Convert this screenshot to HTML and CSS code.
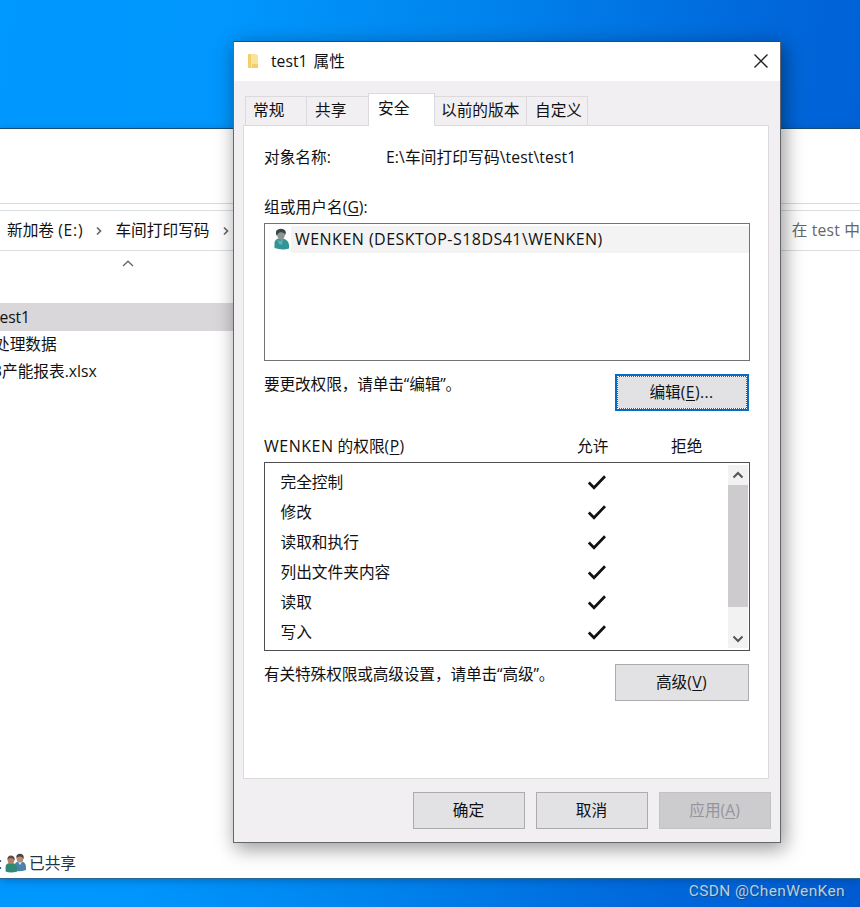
FILE: index.html
```html
<!DOCTYPE html>
<html lang="zh-CN">
<head>
<meta charset="utf-8">
<title>test1 属性</title>
<link rel="stylesheet" href="styles.css">
</head>
<body>
<svg width="0" height="0" class="defs">
  <symbol id="check" viewBox="0 0 20 18"><path d="M1.8 8.5 7 13.8 18 2.2" fill="none" stroke="#111" stroke-width="2.7"/></symbol>
  <symbol id="crumb" viewBox="0 0 6 10"><path d="M1 1.5 4.5 5 1 8.5" fill="none" stroke="#666" stroke-width="1.7"/></symbol>
</svg>
<main class="desktop">
  <section class="explorer">
    <div class="ribbon"></div>
    <div class="address">
      <div class="crumbs"><span>新加卷 <span class="drive">(E:)</span></span><svg class="crumb"><use href="#crumb"/></svg><span>车间打印写码</span><svg class="crumb"><use href="#crumb"/></svg></div>
      <div class="search">在 test 中</div>
    </div>
    <div class="columns"><svg width="12" height="7" viewBox="0 0 12 7"><path d="M1 6 6 1.2 11 6" fill="none" stroke="#666" stroke-width="1.3"/></svg></div>
    <div class="files">
      <div class="file selected">test1</div>
      <div class="file second">处理数据</div>
      <div class="file third">3产能报表<span class="ext">.xlsx</span></div>
    </div>
    <div class="status">
      <span class="colon">:</span>
      <svg width="22" height="20" viewBox="0 0 22 20">
        <path d="M9.5 18V13q0-4 4-4.500h3q4 .5 4.500 5v3.500q-5 2-11.500 1z" fill="#4b83ad"/>
        <path d="m13 9 2 3 2-3z" fill="#dcecf5"/>
        <ellipse cx="15" cy="5.500" rx="3.400" ry="4" fill="#b98d72"/>
        <path d="M11.300 5Q11 .8 15.200.8 19.500 1 18.600 6q-1-2.500-3.500-2.600T11.300 5z" fill="#4b4646"/>
        <path d="M.6 18.500V14q0-3.600 3.800-4h3q4 .5 4.600 4.500v4q-6 2-11.400 0z" fill="#2e8a73"/>
        <ellipse cx="6" cy="7.200" rx="3.300" ry="3.800" fill="#b48367"/>
        <path d="M2.400 7Q2 2.500 6.200 2.500 10.300 2.800 9.600 7.500 8.500 5.200 6 5.100T2.400 7z" fill="#5c4941"/>
      </svg>
      <span>已共享</span>
    </div>
  </section>
  <div class="watermark">CSDN @ChenWenKen</div>

  <section class="dialog">
    <header class="titlebar">
      <svg width="14" height="18" viewBox="0 0 14 18"><path d="M2 2h7l3 1v13H2z" fill="#fbe39a"/><path d="M2 2h3v14H2zM6 12h6v4H6z" fill="#f3ce6d"/></svg>
      <h1>test1 属性</h1>
      <svg width="16" height="16" viewBox="0 0 16 16"><path d="M1.500 1.500 14.500 14.500M14.500 1.500 1.500 14.500" stroke="#222" stroke-width="1.4"/></svg>
    </header>
    <nav class="tabs">
      <span class="tab general">常规</span><span class="tab share">共享</span><span class="tab active">安全</span><span class="tab previous">以前的版本</span><span class="tab custom">自定义</span>
    </nav>
    <div class="panel">
      <div class="object"><span class="object-label">对象名称:</span><span class="path">E:\车间打印写码\test\test1</span></div>
      <div class="group-label">组或用户名(<u>G</u>):</div>
      <div class="users">
        <svg width="18" height="22" viewBox="0 0 18 22">
          <path d="M1.500 20V15q0-3 3.500-4.500h4.500q6 1 6.500 6.500v3.500q-7 2-14.500-.5z" fill="#339593"/>
          <path d="M4 11q3 4 6 0l-1 6-3-1z" fill="#69aeb0"/>
          <path d="M4 5q0-3 4-3t4 4q0 5-4 6-4-1-4-7z" fill="#8c9494"/>
          <path d="M3 6Q2 1 8 .8q6 .4 4.600 6Q11 4 8 4.200 5 4 3.800 8z" fill="#38464a"/>
        </svg>
        <div class="user">WENKEN (DESKTOP-S18DS41\WENKEN)</div>
      </div>
      <div class="action edit"><span>要更改权限，请单击“编辑”。</span><button class="button focused"><span class="focus-ring">编辑<span class="key">(<u>E</u>)...</span></span></button></div>
      <div class="perm-head"><span class="perm-title"><span class="owner">WENKEN</span> 的权限<span class="key">(<u>P</u>)</span></span><span class="allow">允许</span><span>拒绝</span></div>
      <div class="perms">
        <div class="perm-list">
          <div class="perm"><span>完全控制</span><svg class="check"><use href="#check"/></svg></div>
          <div class="perm"><span>修改</span><svg class="check"><use href="#check"/></svg></div>
          <div class="perm"><span>读取和执行</span><svg class="check"><use href="#check"/></svg></div>
          <div class="perm"><span>列出文件夹内容</span><svg class="check"><use href="#check"/></svg></div>
          <div class="perm"><span>读取</span><svg class="check"><use href="#check"/></svg></div>
          <div class="perm"><span>写入</span><svg class="check"><use href="#check"/></svg></div>
        </div>
        <div class="scrollbar">
          <svg width="12" height="8" viewBox="0 0 12 8"><path d="M1.500 6.500 6 2l4.500 4.500" fill="none" stroke="#555" stroke-width="2"/></svg>
          <div class="thumb"></div>
          <svg width="12" height="8" viewBox="0 0 12 8"><path d="M1.500 1.500 6 6l4.500-4.500" fill="none" stroke="#555" stroke-width="2"/></svg>
        </div>
      </div>
      <div class="action advanced"><span>有关特殊权限或高级设置，请单击“高级”。</span><button class="button">高级<span class="key">(<u>V</u>)</span></button></div>
    </div>
    <footer class="footer">
      <button class="button">确定</button><button class="button">取消</button><button class="button disabled">应用(<u>A</u>)</button>
    </footer>
  </section>
</main>
</body>
</html>
```
FILE: styles.css
```css
* { box-sizing: border-box; }
body {
  margin: 0;
  font: 15.7px/22px "Open Sans", "Noto Sans CJK SC", sans-serif;
  color: #111;
}
svg { display: block; flex: none; }
.defs { position: absolute; }
u { text-decoration-thickness: 1px; text-underline-offset: 2px; }
.desktop {
  position: relative;
  width: 860px;
  height: 907px;
  overflow: hidden;
  padding-top: 128px;
  white-space: nowrap;
  background: linear-gradient(97deg, #0099ff 0%, #0096fd 25%, #0085ee 48%, #006bdd 75%, #005bd2 100%);
}
.explorer {
  height: 751px;
  display: flex;
  flex-direction: column;
  background: #fff;
  border-top: 1px solid #174d78;
  border-bottom: 1px solid #286796;
  box-shadow: 0 2px 8px #00306055;
}
.ribbon { height: 75px; border-bottom: 1px solid #d9d9d9; }
.address {
  height: 41px;
  margin-top: 6px;
  padding-bottom: 2px;
  display: flex;
  align-items: center;
  border-top: 1px solid #d9dede;
  border-bottom: 1px solid #d9dede;
}
.crumbs { display: flex; align-items: center; width: 792px; padding-left: 7px; }
.crumb { width: 6px; height: 10px; margin: 2px 13px 0 13px; }
.drive { letter-spacing: .8px; }
.search { color: #666; letter-spacing: .15px; }
.columns { height: 52px; padding: 9px 0 0 122px; }
.files { width: 240px; }
.file { height: 27px; line-height: 26px; }
.selected { height: 28px; line-height: 28px; background: #d9d7d9; text-indent: -6px; letter-spacing: -.1px; }
.second { text-indent: -6px; }
.third { text-indent: -7px; }
.status { margin-top: auto; height: 31px; display: flex; align-items: center; color: #1d3448; }
.colon { width: 5px; text-indent: -2px; }
.status span:last-child { margin-left: 2px; }
.watermark {
  display: flex;
  justify-content: flex-end;
  padding: 1px 15px 0 0;
  font-family: Roboto, sans-serif;
  font-size: 15.5px;
  letter-spacing: .37px;
  color: #b8cee4;
  text-shadow: 1px 1px 1px #174b7c;
}
.dialog {
  position: absolute;
  left: 233px;
  top: 41px;
  width: 548px;
  height: 802px;
  border: 1px solid #66676b;
  border-top-color: #204e78;
  background: #f1eff2;
  box-shadow: 3px 5px 18px 1px #0006;
}
.titlebar { height: 39px; display: flex; align-items: center; background: #fff; padding: 0 11px 2px 12px; }
h1 { margin: 0 auto 0 11px; font-size: inherit; font-weight: 400; word-spacing: 2px; }
.tabs { height: 44px; padding-left: 11px; display: flex; align-items: flex-end; }
.tab { height: 29px; padding-left: 8px; line-height: 27px; border: 1px solid #dcdadd; border-width: 1px 1px 0 0; }
.general { width: 62px; border-left-width: 1px; padding-left: 7px; }
.share { width: 61px; border-right: 0; }
.active { width: 67px; height: 33px; margin-bottom: -1px; padding-left: 9px; line-height: 29px; border-left-width: 1px; background: #fff; }
.previous { width: 92px; padding-left: 6px; }
.custom { width: 61px; }
.panel {
  width: 526px;
  height: 654px;
  margin-left: 9px;
  padding: 20px 18px 0 20px;
  background: #fff;
  border: 1px solid #dcdadd;
}
.object { display: flex; }
.object-label { width: 122px; }
.path { letter-spacing: .11px; }
.group-label { margin-top: 28px; letter-spacing: .05px; }
.users { width: 486px; height: 138px; margin-top: 5px; border: 1px solid #737373; display: flex; padding: 2px 0 0 8px; }
.users svg { margin-top: 2px; }
.user { flex: 1; height: 27px; padding-left: 4px; line-height: 27px; font-size: 16px; letter-spacing: .47px; background: #f3f3f4; }
.action { display: flex; justify-content: space-between; align-items: flex-start; width: 485px; margin-top: 13px; }
.action > span { margin-top: -1px; letter-spacing: -.15px; }
.button {
  font: inherit;
  color: inherit;
  width: 134px;
  height: 37px;
  padding: 0 1px 2px 0;
  border: 1px solid #acacae;
  background: #e2e1e3;
}
.key { letter-spacing: .4px; }
.focused { padding: 0; border: 2px solid #0a6cc0; background: #0a6cc0; }
.focus-ring { display: block; height: 33px; padding-right: 1px; line-height: 30px; border: 1px dotted #fff; background: #e2e1e3 padding-box; }
.perm-head { display: flex; margin-top: 24px; }
.perm-title { width: 313px; }
.owner { font-size: 16px; letter-spacing: .5px; }
.allow { width: 94px; }
.perms { width: 486px; height: 189px; margin-top: 5px; border: 1px solid #4f4f51; display: flex; justify-content: space-between; }
.perm-list { padding: 4px 0 0 15.500px; }
.perm { height: 30px; display: flex; align-items: center; }
.perm > span { width: 306.500px; }
.check { width: 20px; height: 18px; margin-top: 1px; }
.scrollbar { width: 20px; margin: 2px 1px; background: #f3f2f3; display: flex; flex-direction: column; align-items: center; padding: 6px 0 5px; }
.thumb { width: 20px; height: 122px; margin: 6px 0 auto; background: #cdcbcd; }
.footer { display: flex; justify-content: flex-end; gap: 11px; padding: 13px 9px 0 0; }
.footer .button { width: 112px; }
.disabled { color: #96959a; background: #cccbce; border-color: #c2c1c4; }
```
